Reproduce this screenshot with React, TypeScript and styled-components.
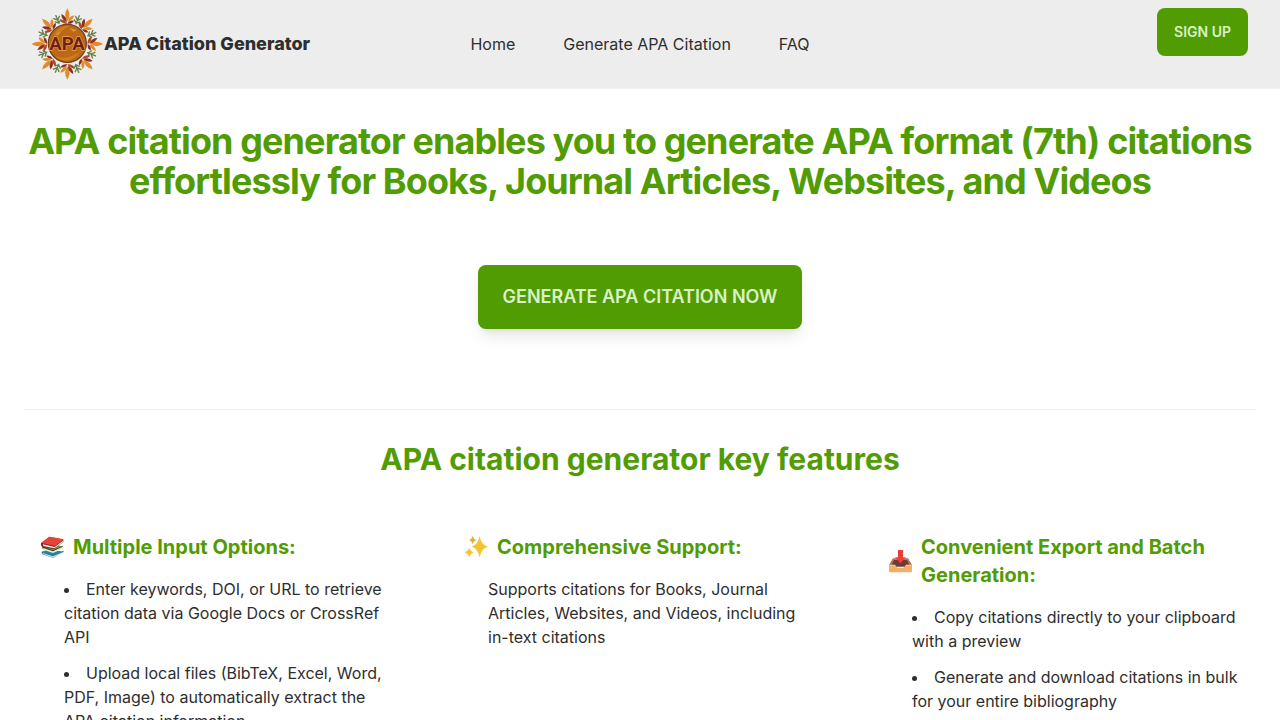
import React from 'react';
import styled, { createGlobalStyle } from 'styled-components';

const green = '#519c03';
const ink = '#2e2e2e';

const GlobalStyle = createGlobalStyle`
  *, *::before, *::after { box-sizing: border-box; }
  body {
    margin: 0;
    background: #fff;
    color: ${ink};
    font-family: Inter, 'Liberation Sans', sans-serif;
    font-size: 16px;
    line-height: 24px;
  }
  h1, h2, h3, p, ul { margin: 0; padding: 0; }
`;

const Header = styled.header`
  background: #ededed;
  border-bottom: 1px solid #f0f0f0;
`;

const NavBar = styled.nav`
  display: flex;
  align-items: flex-start;
  padding: 8px 32px;
`;

const NavSide = styled.div<{ $end?: boolean }>`
  display: flex;
  flex: 1;
  justify-content: ${(p) => (p.$end ? 'flex-end' : 'flex-start')};
`;

const Brand = styled.a`
  display: flex;
  align-items: center;
  color: ${ink};
  font-size: 18px;
  font-weight: 800;
  line-height: 24px;
  text-decoration: none;
  white-space: nowrap;
`;

const LogoArt = styled.svg`
  display: block;
  width: 72px;
  height: 72px;
`;

const NavLinks = styled.div`
  display: flex;
  align-self: center;
  gap: 48px;
`;

const NavLink = styled.a`
  color: ${ink};
  text-decoration: none;
`;

const Button = styled.button<{ $large?: boolean }>`
  height: ${(p) => (p.$large ? '64px' : '48px')};
  padding: 0 ${(p) => (p.$large ? '25px' : '17px')} 1px;
  border: 0;
  border-radius: 8px;
  background: ${green};
  color: #d9f2c6;
  font-family: inherit;
  font-size: ${(p) => (p.$large ? '18px' : '14px')};
  font-weight: 600;
  text-transform: uppercase;
  cursor: pointer;
  box-shadow: ${(p) =>
    p.$large ? '0 10px 15px -3px rgba(0,0,0,.1), 0 4px 6px -4px rgba(0,0,0,.1)' : 'none'};
`;

const Main = styled.main`
  padding: 32px 24px;
`;

const Hero = styled.section`
  display: flex;
  flex-direction: column;
  align-items: center;
  gap: 64px;
  padding-bottom: 80px;
  box-shadow: 0 1px 0 #f2f2f2;
`;

const Title = styled.h1`
  color: ${green};
  font-size: 36px;
  font-weight: 700;
  line-height: 40px;
  letter-spacing: -0.025em;
  text-align: center;
`;

const Features = styled.section`
  padding-top: 32px;
`;

const SectionTitle = styled.h2`
  color: ${green};
  font-size: 30px;
  font-weight: 700;
  line-height: 36px;
  text-align: center;
`;

const FeatureGrid = styled.div`
  display: grid;
  grid-template-columns: repeat(3, minmax(0, 1fr));
  gap: 40px;
  margin-top: 40px;
`;

const Feature = styled.article`
  padding: 16px;
`;

const FeatureTitle = styled.h3`
  display: flex;
  align-items: center;
  gap: 8px;
  color: ${green};
  font-size: 20px;
  font-weight: 700;
  line-height: 28px;
`;

const Icon = styled.svg`
  flex: none;
  width: 25px;
  height: 24px;
`;

const FeatureList = styled.ul<{ $plain?: boolean }>`
  display: flex;
  flex-direction: column;
  gap: 12px;
  margin-top: 16px;
  padding-left: 24px;
  list-style: ${(p) => (p.$plain ? 'none' : 'disc inside')};
`;

const octants = [0, 45, 90, 135, 180, 225, 270, 315];

function Logo() {
  return (
    <LogoArt viewBox="0 0 216 216" aria-hidden="true">
      {octants.map((a) => (
        <g key={a} transform={`translate(106 108) rotate(${a})`}>
          <path d="M0-68Q-13-86 0-107Q13-86 0-68Z" fill="#df8a2c" />
          <path d="M-1-66Q-18-72-18-90Q-3-84-1-66Z" fill="#8c2f20" />
          <path d="M1-66Q18-72 21-86Q4-84 1-66Z" fill="#df8a2c" />
          <path d="M0-61Q-15-59-23-72Q-7-75 0-61Z" fill="#b2491f" />
          <path d="M0-61Q15-59 20-70Q7-73 0-61Z" fill="#8c2f20" />
          <path
            transform="rotate(23)"
            d="M0-66V-92M0-68L-9-75M0-68L9-75M0-77L-9-86M0-77L9-86"
            stroke="#66804a"
            strokeWidth="4"
            strokeLinecap="round"
            fill="none"
          />
        </g>
      ))}
      <circle cx="106" cy="106" r="57" fill="#bd6815" stroke="#74401d" strokeWidth="4" />
      <path d="M63 83Q80 53 112 54Q94 62 85 75ZM70 144Q104 158 143 132Q128 158 101 158Q82 157 70 144Z" fill="#d6891f" opacity=".7" />
      <path d="M112 60L135 66L124 72ZM72 78L84 72L78 84Z" fill="#dfa44e" opacity=".7" />
      <text
        x="105"
        y="126"
        textAnchor="middle"
        fontFamily="Roboto, sans-serif"
        fontWeight="700"
        fontSize="56"
        fill="#74200f"
        stroke="#e9a866"
        strokeWidth="4"
        strokeLinejoin="round"
        paintOrder="stroke"
      >
        APA
      </text>
    </LogoArt>
  );
}

function BooksIcon() {
  return (
    <Icon viewBox="0 0 75 72" aria-hidden="true">
      <path d="M5 50L31 41L71 51L39 69L7 58Z" fill="#327fa5" />
      <path d="M9 52L39 62L69 49V55L39 68L9 57Z" fill="#cfe6ea" />
      <path d="M5 50L39 60L71 47V50L39 64L5 53Z" fill="#2577a7" />
      <path d="M7 34L34 28L68 34L39 51L7 42Z" fill="#71a83a" />
      <path d="M10 37L39 47L67 34V42L39 54L10 44Z" fill="#e1edce" />
      <path d="M7 34L39 45L68 32V35L39 49L7 38Z" fill="#354c30" />
      <path d="M4 23L28 5L70 13L45 34L7 29Z" fill="#df3b32" />
      <path d="M4 23Q0 31 8 36L42 43L70 21L70 13L45 32Z" fill="#91261f" />
      <path d="M9 28L44 36L69 17V22L43 40L10 33Z" fill="#e7eaf0" />
      <path d="M4 23L28 5L70 13L45 32Z" fill="#e44338" />
    </Icon>
  );
}

function SparklesIcon() {
  return (
    <Icon viewBox="0 0 75 72" aria-hidden="true" fill="#f5c32e">
      <path d="M47 3Q51 30 72 35Q51 40 47 67Q42 40 23 35Q42 30 47 3Z" />
      <path d="M16 38Q19 49 30 52Q19 55 16 67Q12 55 2 52Q12 49 16 38Z" />
      <path d="M26 3Q28 12 37 15Q28 18 26 27Q24 18 15 15Q24 12 26 3Z" fill="#e6ae30" />
    </Icon>
  );
}

function InboxIcon() {
  return (
    <Icon viewBox="0 0 75 72" aria-hidden="true">
      <path d="M15 29H60L72 49V53H3V49Z" fill="#6b3e35" />
      <path d="M15 28H60L71 49H65L57 33H18L10 49H4Z" fill="#b57b54" />
      <path d="M3 47H22Q24 56 30 56H45Q51 56 53 47H72V66Q72 70 68 70H7Q3 70 3 66Z" fill="#f3ae69" />
      <path d="M5 49H21M54 49H70" stroke="#ffcc8e" strokeWidth="3" />
      <path d="M30 3H45V25H54L37 43L21 25H30Z" fill="#ed403d" />
      <path d="M31 10H44M31 18H44" stroke="#c93235" strokeWidth="2" />
    </Icon>
  );
}

const features = [
  {
    icon: <BooksIcon />,
    title: 'Multiple Input Options:',
    items: [
      'Enter keywords, DOI, or URL to retrieve citation data via Google Docs or CrossRef API',
      'Upload local files (BibTeX, Excel, Word, PDF, Image) to automatically extract the APA citation information',
    ],
  },
  {
    icon: <SparklesIcon />,
    title: 'Comprehensive Support:',
    plain: true,
    items: ['Supports citations for Books, Journal Articles, Websites, and Videos, including in-text citations'],
  },
  {
    icon: <InboxIcon />,
    title: 'Convenient Export and Batch Generation:',
    items: [
      'Copy citations directly to your clipboard with a preview',
      'Generate and download citations in bulk for your entire bibliography',
    ],
  },
];

export default function App() {
  return (
    <>
      <GlobalStyle />
      <Header>
        <NavBar>
          <NavSide>
            <Brand href="#home">
              <Logo />
              APA Citation Generator
            </Brand>
          </NavSide>
          <NavLinks>
            <NavLink href="#home">Home</NavLink>
            <NavLink href="#generate">Generate APA Citation</NavLink>
            <NavLink href="#faq">FAQ</NavLink>
          </NavLinks>
          <NavSide $end>
            <Button type="button">Sign up</Button>
          </NavSide>
        </NavBar>
      </Header>
      <Main>
        <Hero>
          <Title>
            APA citation generator enables you to generate APA format (7th) citations effortlessly for
            Books, Journal Articles, Websites, and Videos
          </Title>
          <Button type="button" $large>
            Generate APA Citation Now
          </Button>
        </Hero>
        <Features>
          <SectionTitle>APA citation generator key features</SectionTitle>
          <FeatureGrid>
            {features.map((f) => (
              <Feature key={f.title}>
                <FeatureTitle>
                  {f.icon}
                  <span>{f.title}</span>
                </FeatureTitle>
                <FeatureList $plain={f.plain}>
                  {f.items.map((item) => (
                    <li key={item}>{item}</li>
                  ))}
                </FeatureList>
              </Feature>
            ))}
          </FeatureGrid>
        </Features>
      </Main>
    </>
  );
}
